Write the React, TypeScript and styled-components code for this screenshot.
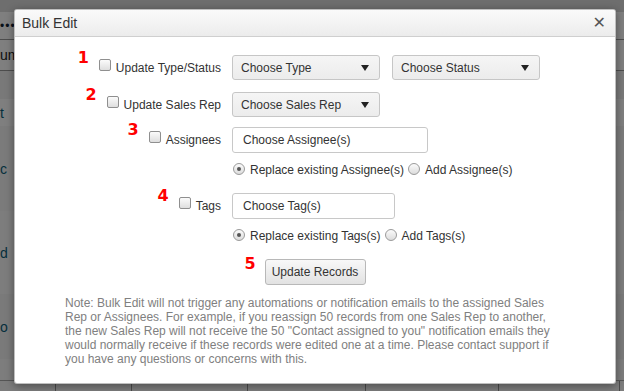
import React from 'react';
import styled, { createGlobalStyle } from 'styled-components';

const GlobalStyle = createGlobalStyle`
  html, body {
    margin: 0;
    padding: 0;
  }
  body {
    font-family: "Liberation Sans", Arial, sans-serif;
    background: #fff;
  }
`;

const Screen = styled.div`
  position: relative;
  width: 624px;
  height: 391px;
  overflow: hidden;
  background: #fff;
`;

/* page behind the dialog */
const TopBar = styled.div`
  height: 12px;
  background: #dcdcdc;
`;

const Toolbar = styled.div`
  height: 27px;
  border-bottom: 1px solid #9a9a9a;
  display: flex;
  align-items: center;
  font-size: 12px;
  color: #123;
  letter-spacing: 1px;
`;

const HeadRow = styled.div`
  height: 30px;
  border-bottom: 1px solid #9a9a9a;
  display: flex;
  align-items: center;
  font-size: 14px;
  color: #222;
`;

const DataRow = styled.div<{ h: number; shade: string }>`
  height: ${p => p.h}px;
  background: ${p => p.shade};
  display: flex;
  align-items: center;
  font-size: 14px;
  color: #0b5f7a;
`;

const ColumnLines = styled.div`
  position: absolute;
  left: 0;
  right: 0;
  bottom: 0;
  height: 10px;
  display: grid;
  grid-template-columns: 56px 76px 116px 118px 133px 121px 1fr;
  border-top: 1px solid #aaa;
  & > div {
    border-right: 1px solid #999;
  }
`;

const Overlay = styled.div`
  position: absolute;
  inset: 0;
  background: rgba(0, 0, 0, 0.5);
`;

/* dialog */
const Modal = styled.div`
  position: absolute;
  left: 14px;
  top: 9px;
  width: 600px;
  background: #fff;
  border: 1px solid rgba(0, 0, 0, 0.25);
  border-radius: 3px;
  box-shadow: 0 2px 8px rgba(0, 0, 0, 0.4);
  overflow: hidden;
`;

const Header = styled.div`
  height: 26px;
  display: flex;
  align-items: center;
  justify-content: space-between;
  padding: 0 9px 0 7px;
  background: linear-gradient(#fafafa, #ececec);
  border-bottom: 1px solid #cfcfcf;
`;

const Title = styled.span`
  font-size: 14px;
  color: #333;
`;

const Close = styled.span`
  font-family: "DejaVu Sans", sans-serif;
  font-size: 16px;
  color: #555;
  line-height: 1;
`;

const Body = styled.div`
  padding: 18px 14px 17px;
  display: flex;
  flex-direction: column;
`;

const Row = styled.div<{ mt?: number }>`
  display: grid;
  grid-template-columns: 192px 1fr;
  column-gap: 11px;
  margin-top: ${p => p.mt || 0}px;
`;

const LabelGroup = styled.div`
  display: flex;
  justify-content: flex-end;
  align-items: center;
  height: 25px;
`;

const Num = styled.span`
  align-self: flex-start;
  margin-top: -6px;
  margin-right: 10px;
  font-family: "DejaVu Sans", Verdana, sans-serif;
  font-weight: bold;
  font-size: 16px;
  line-height: 17px;
  color: #f00;
`;

const Check = styled.span`
  align-self: flex-start;
  margin-top: 4px;
  width: 10px;
  height: 10px;
  border: 1px solid #8f8f8f;
  border-radius: 2px;
  background: linear-gradient(#fbfbfb, #dedede);
  margin-right: 5px;
`;

const Label = styled.span`
  font-size: 12px;
  color: #333;
`;

const Controls = styled.div`
  display: flex;
  gap: 12px;
  align-items: center;
`;

const Select = styled.div<{ w: number }>`
  width: ${p => p.w}px;
  height: 25px;
  box-sizing: border-box;
  border: 1px solid #c6c6c6;
  border-radius: 3px;
  background: linear-gradient(#f5f5f5, #ececec);
  display: flex;
  align-items: center;
  justify-content: space-between;
  padding: 0 10px 0 8px;
  font-size: 12px;
  color: #333;
`;

const Input = styled.div<{ w: number }>`
  width: ${p => p.w}px;
  height: 26px;
  box-sizing: border-box;
  border: 1px solid #c8c8c8;
  border-radius: 3px;
  background: #fff;
  display: flex;
  align-items: center;
  padding-left: 10px;
  font-size: 12px;
  color: #333;
`;

const RadioRow = styled.div<{ mt: number }>`
  display: flex;
  align-items: center;
  height: 16px;
  margin-top: ${p => p.mt}px;
  margin-left: 204px;
  font-size: 12px;
  color: #333;
`;

const Radio = styled.span<{ checked?: boolean }>`
  width: 10px;
  height: 10px;
  border-radius: 50%;
  border: 1px solid #9a9a9a;
  background: linear-gradient(#fbfbfb, #dcdcdc);
  margin: 0 5px 2px 0;
  display: flex;
  align-items: center;
  justify-content: center;
  &::after {
    content: '';
    width: 4px;
    height: 4px;
    border-radius: 50%;
    background: ${p => (p.checked ? '#555' : 'transparent')};
  }
`;

const RadioText = styled.span`
  margin-right: 4px;
`;

const ButtonRow = styled.div`
  display: flex;
  justify-content: center;
  margin-top: 15px;
`;

const ButtonWrap = styled.div`
  position: relative;
`;

const StepBadge = styled(Num)`
  position: absolute;
  left: -20px;
  top: -4px;
  margin: 0;
`;

const Button = styled.button`
  width: 101px;
  height: 26px;
  border: 1px solid #b8b8b8;
  border-radius: 3px;
  background: linear-gradient(#f8f8f8, #e2e2e2);
  font-family: "Liberation Sans", Arial, sans-serif;
  font-size: 12px;
  color: #333;
  padding: 0;
`;

const Note = styled.p`
  width: 500px;
  margin: 11px auto 0;
  font-size: 12px;
  line-height: 14px;
  color: #808080;
`;

const Arrow = () => (
  <svg width="8" height="6" viewBox="0 0 8 6">
    <path d="M0 0h8L4 6z" fill="#222" />
  </svg>
);

const App: React.FC = () => {
  const rows = [
    { h: 28, shade: '#f2f2f2', text: '' },
    { h: 27, shade: '#ffffff', text: 't' },
    { h: 85, shade: '#f6f6f6', text: 'c' },
    { h: 83, shade: '#fbfbfb', text: 'd' },
    { h: 65, shade: '#f4f4f4', text: 'o' },
    { h: 40, shade: '#fafafa', text: '' }
  ];

  return (
    <Screen>
      <GlobalStyle />
      <TopBar />
      <Toolbar>•••</Toolbar>
      <HeadRow>um</HeadRow>
      {rows.map((r, i) => (
        <DataRow key={i} h={r.h} shade={r.shade}>{r.text}</DataRow>
      ))}
      <ColumnLines>
        {[0, 1, 2, 3, 4, 5].map(i => <div key={i} />)}
      </ColumnLines>
      <Overlay />

      <Modal>
        <Header>
          <Title>Bulk Edit</Title>
          <Close>✕</Close>
        </Header>
        <Body>
          <Row>
            <LabelGroup>
              <Num>1</Num>
              <Check />
              <Label>Update Type/Status</Label>
            </LabelGroup>
            <Controls>
              <Select w={148}>Choose Type <Arrow /></Select>
              <Select w={148}>Choose Status <Arrow /></Select>
            </Controls>
          </Row>
          <Row mt={12}>
            <LabelGroup>
              <Num>2</Num>
              <Check />
              <Label>Update Sales Rep</Label>
            </LabelGroup>
            <Controls>
              <Select w={148}>Choose Sales Rep <Arrow /></Select>
            </Controls>
          </Row>
          <Row mt={10}>
            <LabelGroup>
              <Num>3</Num>
              <Check />
              <Label>Assignees</Label>
            </LabelGroup>
            <Controls>
              <Input w={196}>Choose Assignee(s)</Input>
            </Controls>
          </Row>
          <RadioRow mt={9}>
            <Radio checked />
            <RadioText>Replace existing Assignee(s)</RadioText>
            <Radio />
            <RadioText>Add Assignee(s)</RadioText>
          </RadioRow>
          <Row mt={15}>
            <LabelGroup>
              <Num>4</Num>
              <Check />
              <Label>Tags</Label>
            </LabelGroup>
            <Controls>
              <Input w={163}>Choose Tag(s)</Input>
            </Controls>
          </Row>
          <RadioRow mt={9}>
            <Radio checked />
            <RadioText>Replace existing Tags(s)</RadioText>
            <Radio />
            <RadioText>Add Tags(s)</RadioText>
          </RadioRow>
          <ButtonRow>
            <ButtonWrap>
              <StepBadge>5</StepBadge>
              <Button>Update Records</Button>
            </ButtonWrap>
          </ButtonRow>
          <Note>
            Note: Bulk Edit will not trigger any automations or notification emails to the assigned Sales
            Rep or Assignees. For example, if you reassign 50 records from one Sales Rep to another,
            the new Sales Rep will not receive the 50 "Contact assigned to you" notification emails they
            would normally receive if these records were edited one at a time. Please contact support if
            you have any questions or concerns with this.
          </Note>
        </Body>
      </Modal>
    </Screen>
  );
};

export default App;
